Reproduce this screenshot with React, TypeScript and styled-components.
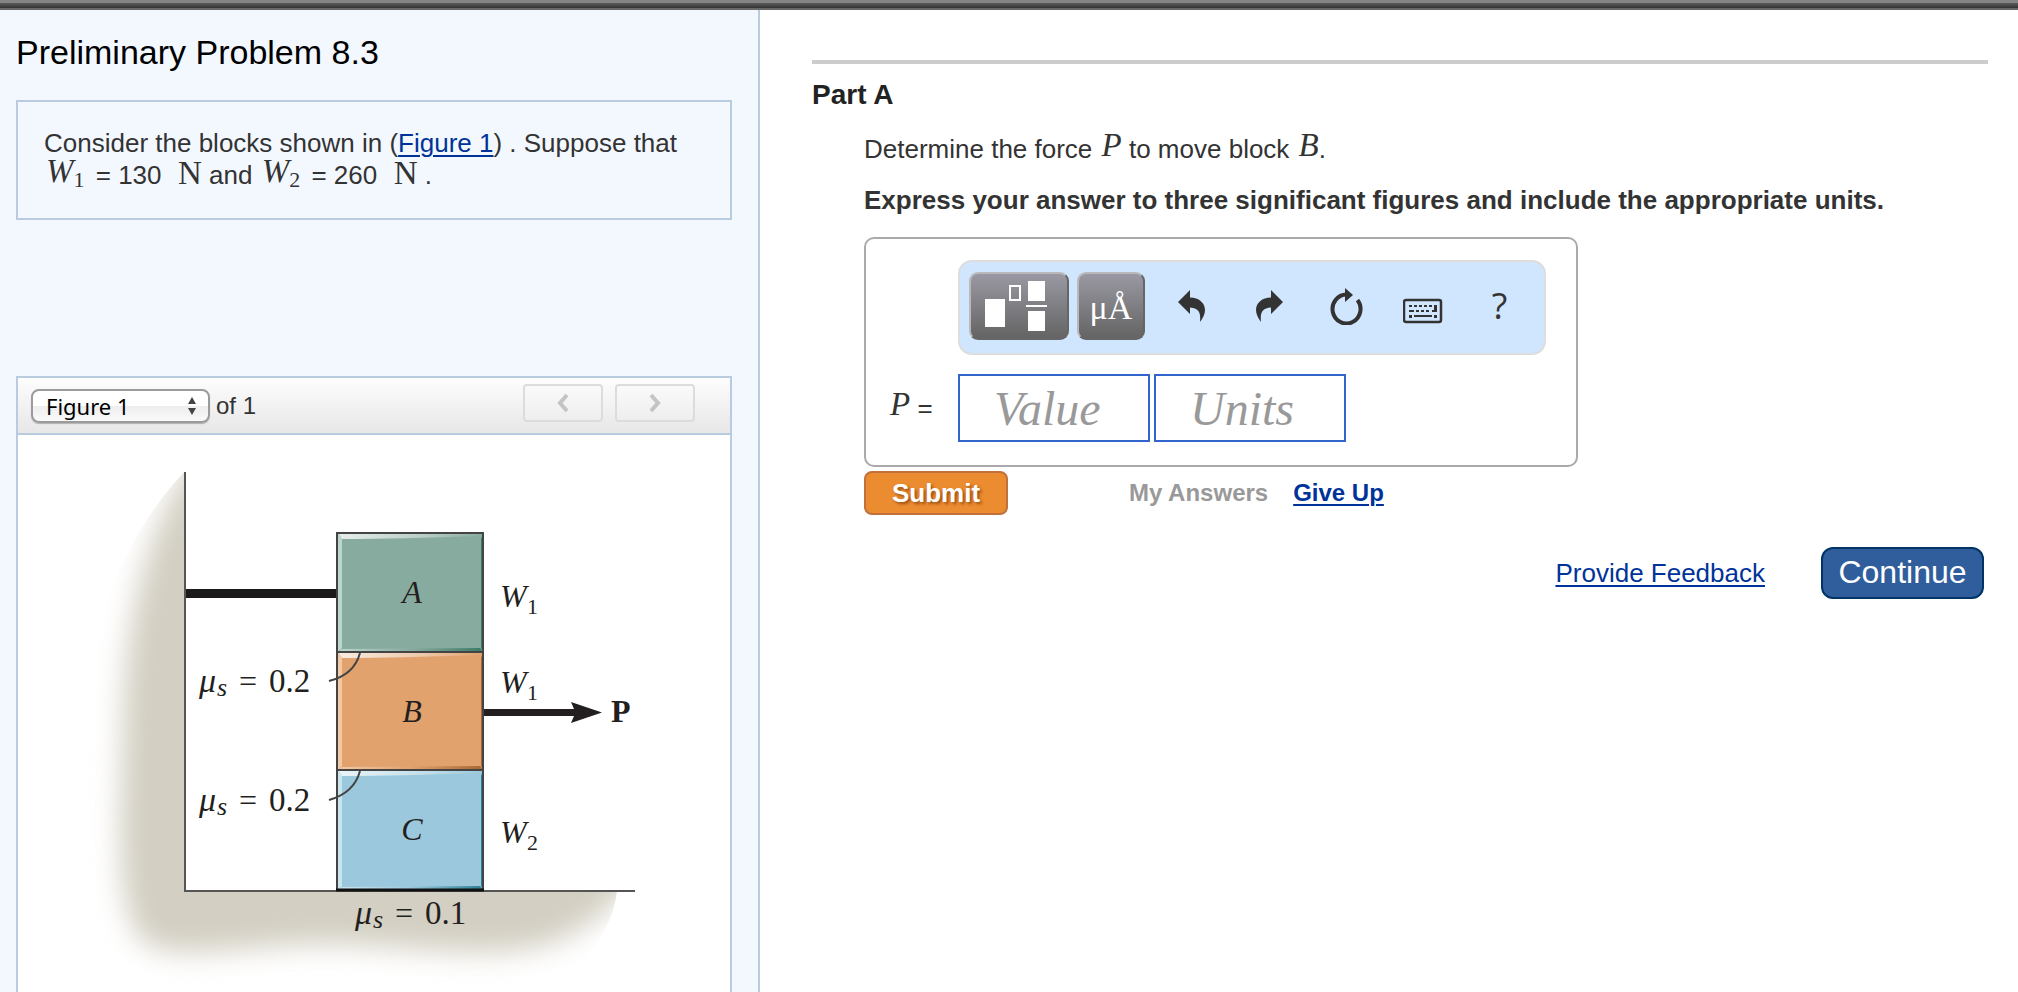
import React from "react";
import styled, { createGlobalStyle } from "styled-components";

const SANS = '"Liberation Sans", Arial, sans-serif';
const SERIF = '"Liberation Serif", "Times New Roman", serif';

const GlobalStyle = createGlobalStyle`
  *, *::before, *::after { box-sizing: border-box; }
  body {
    margin: 0;
    background: #fff;
    color: #333;
    font-family: ${SANS};
    font-size: 26px;
    line-height: 32px;
  }
  a { color: #003399; text-underline-offset: 3px; text-decoration-thickness: 2px; }
`;

const Page = styled.div`
  display: flex;
  flex-direction: column;
  min-height: 100vh;
`;

const TopBar = styled.div`
  flex: none;
  height: 10px;
  background: linear-gradient(#858585 0 3px, #5a5a5a 3px, #333 8px, #686868 8px);
`;

const Columns = styled.div`
  flex: 1;
  display: grid;
  grid-template-columns: minmax(0, 760fr) minmax(0, 1258fr);
`;

const ProblemPanel = styled.aside`
  display: flex;
  flex-direction: column;
  padding: 22px 26px 0 16px;
  background: #f3f8ff;
  border-right: 2px solid #b9cbdf;
`;

const Title = styled.h1`
  margin: 0 0 28px;
  font-size: 34px;
  line-height: 40px;
  font-weight: 400;
  color: #000;
`;

const Statement = styled.p`
  margin: 0 0 156px;
  min-height: 120px;
  padding: 25px 26px;
  border: 2px solid #b9cbdf;
`;

const MathText = styled.span<{ $italic?: boolean }>`
  margin-left: 2px;
  font-family: ${SERIF};
  font-size: 33px;
  line-height: 1px;
  font-style: ${(p) => (p.$italic ? "italic" : "normal")};
  vertical-align: ${(p) => (p.$italic ? "2px" : "baseline")};
`;

const Subscript = styled.sub`
  font-family: ${SERIF};
  font-size: 22px;
  line-height: 1px;
  vertical-align: -3px;
  margin-right: 4px;
`;

const FigureCard = styled.section`
  flex: 1;
  display: flex;
  flex-direction: column;
  background: #fff;
  border: 2px solid #b9cbdf;
  border-bottom: 0;
`;

const FigureHeader = styled.header`
  display: flex;
  align-items: center;
  gap: 12px;
  height: 57px;
  padding: 0 35px 0 13px;
  border-bottom: 2px solid #b9cbdf;
  background: linear-gradient(#fdfdfd, #e7e7e7);
`;

const FigurePicker = styled.label`
  display: flex;
  align-items: center;
  gap: 6px;
  margin-right: auto;
  font-size: 24px;
`;

const SelectFrame = styled.span`
  display: grid;
  align-items: center;
  width: 179px;
  > * { grid-area: 1 / 1; }
  > svg { justify-self: end; margin-right: 13px; pointer-events: none; }
`;

const Select = styled.select`
  appearance: none;
  height: 34px;
  padding: 0 30px 0 13px;
  border: 2px solid #9b9b9b;
  border-radius: 8px;
  background: linear-gradient(#fff 0 50%, #ededed 50%, #fafafa);
  box-shadow: 0 1px 1px rgba(0, 0, 0, 0.25);
  font: 22px/28px "Noto Sans", sans-serif;
  color: #000;
`;

const PagerButton = styled.button`
  display: grid;
  place-items: center;
  width: 80px;
  height: 38px;
  margin-bottom: 6px;
  padding: 0;
  border: 2px solid #dcdcdc;
  border-radius: 4px;
  background: linear-gradient(#fafafa, #eee);
`;

const Diagram = styled.svg`
  display: block;
  width: 100%;
  height: auto;
  font-family: ${SERIF};
  font-size: 32px;
  fill: #231f20;
`;

const AnswerPanel = styled.main`
  padding: 50px 30px 0 52px;
`;

const Rule = styled.hr`
  margin: 0;
  border: 0;
  height: 4px;
  background: #ccc;
`;

const PartTitle = styled.h2`
  margin: 15px 0 0;
  font-size: 28px;
  line-height: 32px;
  color: #222;
`;

const PartBody = styled.div`
  padding-left: 52px;
`;

const Question = styled.p<{ $strong?: boolean }>`
  margin: ${(p) => (p.$strong ? "19px 0 21px" : "22px 0 0")};
  font-weight: ${(p) => (p.$strong ? 700 : 400)};
`;

const AnswerBox = styled.div`
  display: grid;
  grid-template-columns: 70px auto;
  justify-content: start;
  row-gap: 19px;
  width: fit-content;
  padding: 21px 30px 23px 22px;
  border: 2px solid #aaa;
  border-radius: 10px;
`;

const Toolbar = styled.div`
  grid-column: 2;
  display: flex;
  align-items: center;
  gap: 8px;
  height: 95px;
  padding: 0 0 4px 9px;
  width: 588px;
  border: 2px solid #ddd;
  border-radius: 14px;
  background: #d0e5fe;
`;

const TemplateButton = styled.button<{ $wide?: boolean }>`
  display: grid;
  place-items: center;
  width: ${(p) => (p.$wide ? 100 : 68)}px;
  height: 68px;
  padding: ${(p) => (p.$wide ? "0 6px 0 0" : "5px 0 0")};
  border: 2px solid;
  border-color: #b9b9bb #666 #666 #b9b9bb;
  border-radius: 9px;
  background: linear-gradient(#9a99a3, #646464);
  color: #fff;
  font: 34px/40px ${SERIF};
`;

const IconGroup = styled.div`
  display: flex;
`;

const IconButton = styled.button`
  display: grid;
  place-items: center;
  width: 77px;
  height: 60px;
  padding: 0;
  border: 0;
  background: none;
  color: #333;
  font: 36px/40px "Open Sans", ${SANS};
`;

const AnswerLabel = styled.label`
  align-self: center;
`;

const Fields = styled.div`
  display: flex;
  gap: 4px;
`;

const Field = styled.input`
  width: 192px;
  height: 68px;
  padding: 0 30px 0 34px;
  border: 2px solid #3366cc;
  background: #fff;
  font: italic 48px/60px ${SERIF};
  color: #333;
  &::placeholder { color: #999; opacity: 1; }
`;

const Actions = styled.div`
  display: flex;
  align-items: center;
  margin-top: 4px;
  font-size: 24px;
  font-weight: 700;
`;

const SubmitButton = styled.button`
  width: 144px;
  height: 44px;
  margin-right: 121px;
  padding: 0;
  border: 2px solid #c07038;
  border-radius: 8px;
  background: #ec8c30;
  color: #fff;
  font: 700 26px/32px ${SANS};
  text-shadow: 2px 2px 3px rgba(100, 40, 0, 0.6);
`;

const Muted = styled.span`
  margin-right: 25px;
  color: #999;
`;

const Footer = styled.footer`
  display: flex;
  justify-content: flex-end;
  align-items: center;
  gap: 56px;
  margin-top: 32px;
  padding-right: 4px;
`;

const ContinueButton = styled.button`
  width: 163px;
  height: 52px;
  padding: 0 0 2px;
  border: 2px solid #003366;
  border-radius: 12px;
  background: #305d9b;
  color: #fff;
  font: 32px/40px ${SANS};
`;

type BlockProps = {
  y: number;
  height: number;
  fill: string;
  light: string;
  dark: string;
  name: string;
};

function Block({ y, height, fill, light, dark, name }: BlockProps) {
  const bottom = y + height;
  const shade = `shade-${name}`;
  const glow = `glow-${name}`;
  return (
    <g>
      <defs>
        <linearGradient id={shade}>
          <stop offset="0" stopColor={light} />
          <stop offset="0.5" stopColor={fill} />
          <stop offset="1" stopColor={dark} />
        </linearGradient>
        <linearGradient id={glow}>
          <stop offset="0" stopColor="#fff" stopOpacity="0.8" />
          <stop offset="0.6" stopColor="#fff" stopOpacity="0.4" />
          <stop offset="1" stopColor="#fff" stopOpacity="0" />
        </linearGradient>
      </defs>
      <rect x="338" y={y} width="145" height={height} fill={fill} />
      <path d={`M338 ${y}H483L478 ${y + 3}Q400 ${y + 6} 342 ${y + 6}Z`} fill={`url(#${glow})`} />
      <path d={`M338 ${y}L342 ${y + 6}V${bottom - 4}L338 ${bottom}Z`} fill={light} />
      <path d={`M338 ${bottom}L342 ${bottom - 3}L480 ${bottom - 4}L483 ${bottom}Z`} fill={`url(#${shade})`} />
      <path d={`M483 ${y}L481 ${y + 6}V${bottom - 4}L483 ${bottom}Z`} fill={dark} />
      <rect x="337" y={y} width="146" height={height} fill="none" stroke="#444" strokeWidth="2" />
      <text x="412" y={y + 70} textAnchor="middle" fontStyle="italic">{name}</text>
    </g>
  );
}

function Friction({ x, y, value }: { x: number; y: number; value: string }) {
  return (
    <g>
      <text x={x} y={y} fontSize="34" fontStyle="italic">μ</text>
      <text x={x + 18} y={y + 4} fontSize="26" fontStyle="italic">s</text>
      <text x={x + 40} y={y}>=</text>
      <text x={x + 70} y={y} fontSize="33">{value}</text>
    </g>
  );
}

function Weight({ y, index }: { y: number; index: string }) {
  return (
    <g>
      <text x="500" y={y} fontStyle="italic">W</text>
      <text x="527" y={y + 7} fontSize="22">{index}</text>
    </g>
  );
}

function BlocksDiagram() {
  return (
    <Diagram viewBox="18 435 712 557" role="img" aria-label="Stacked blocks A, B and C">
      <defs>
        <filter id="soft" x="-20%" y="-20%" width="140%" height="140%">
          <feGaussianBlur stdDeviation="14" />
        </filter>
        <clipPath id="ground">
          <path d="M185 471C135 525 84 610 84 760V992H540Q610 950 617 891H185Z" />
        </clipPath>
      </defs>
      <g clipPath="url(#ground)">
        <path
          d="M225 420C160 490 130 580 124 700C122 800 112 890 138 936C165 966 230 946 320 944C400 944 480 962 545 945C605 925 640 880 640 855H215Z"
          fill="#d3cfc2"
          filter="url(#soft)"
        />
      </g>
      <path d="M185 472V891H635" fill="none" stroke="#555" strokeWidth="2" />
      <rect x="186" y="589" width="151" height="9" fill="#1c191a" />
      <Block name="A" y={533} height={119} fill="#88ab9f" light="#bcd6cc" dark="#3a7a66" />
      <Block name="B" y={652} height={118} fill="#e2a26e" light="#f3c9a4" dark="#a86635" />
      <Block name="C" y={770} height={120} fill="#9bc8dc" light="#cbe5f0" dark="#2b8094" />
      <path d="M336 890H484" stroke="#111" strokeWidth="3" />
      <path d="M360 653Q354 675 329 681M360 771Q354 793 329 800" fill="none" stroke="#444" strokeWidth="2" />
      <path d="M484 709H574L571 702L602 712.500L571 723L574 716H484Z" />
      <Weight y={607} index="1" />
      <Weight y={693} index="1" />
      <Weight y={843} index="2" />
      <text x="611" y="722" fontWeight="700">P</text>
      <Friction x={199} y={692} value="0.2" />
      <Friction x={199} y={811} value="0.2" />
      <Friction x={355} y={924} value="0.1" />
    </Diagram>
  );
}

function TemplatesIcon() {
  return (
    <svg width="64" height="54" viewBox="0 0 64 54" fill="#fff">
      <rect x="1" y="20" width="20" height="28" />
      <rect x="26" y="7" width="10" height="14" fill="none" stroke="#fff" strokeWidth="2" />
      <rect x="44" y="2" width="17" height="20" />
      <rect x="42" y="26" width="21" height="2" />
      <rect x="44" y="32" width="17" height="20" />
    </svg>
  );
}

function UndoIcon({ flipped }: { flipped?: boolean }) {
  return (
    <svg width="28" height="34" viewBox="0 0 28 34" fill="currentColor">
      <path
        transform={flipped ? "matrix(-1 0 0 1 28 0)" : undefined}
        d="M0 13L12 1V8.500C21 8.500 27 14 27 21C27 25 25 29 22 33C23 24 21 19 12 18.500V25Z"
      />
    </svg>
  );
}

function ResetIcon() {
  return (
    <svg width="34" height="38" viewBox="0 0 34 38">
      <path d="M17.500 7.500A14 14.500 0 1 0 28.500 13" fill="none" stroke="currentColor" strokeWidth="4" />
      <path d="M16 1L24 8L16 15Z" fill="currentColor" />
    </svg>
  );
}

function KeyboardIcon() {
  return (
    <svg width="40" height="38" viewBox="0 0 40 38" fill="currentColor">
      <rect x="1" y="13" width="37" height="22" rx="2" fill="none" stroke="currentColor" strokeWidth="2.500" />
      {[6, 11, 16, 21, 26].map((x) => (
        <rect key={x} x={x} y="18" width="3" height="2" />
      ))}
      <path d="M31 18H34V25H29V23H31ZM6 23H11V25H6ZM13 23H16V25H13ZM18 23H21V25H18ZM23 23H26V25H23Z" />
      <path d="M6 28H9V31H6ZM11 28H29V30H11ZM31 28H34V31H31Z" />
    </svg>
  );
}

function Chevron({ right }: { right?: boolean }) {
  return (
    <svg width="14" height="20" viewBox="0 0 14 20" fill="none" stroke="#c4c4c4" strokeWidth="4">
      <path d={right ? "M3 2L10 10L3 18" : "M11 2L4 10L11 18"} />
    </svg>
  );
}

export default function App() {
  return (
    <>
      <GlobalStyle />
      <Page>
        <TopBar />
        <Columns>
          <ProblemPanel>
            <Title>Preliminary Problem 8.3</Title>
            <Statement>
              Consider the blocks shown in (<a href="#figure">Figure 1</a>) . Suppose that{" "}
              <MathText $italic>W</MathText>
              <Subscript>1</Subscript> = 130 &nbsp;<MathText>N</MathText> and{" "}
              <MathText $italic>W</MathText>
              <Subscript>2</Subscript> = 260 &nbsp;<MathText>N</MathText> .
            </Statement>
            <FigureCard id="figure">
              <FigureHeader>
                <FigurePicker>
                  <SelectFrame>
                    <Select aria-label="Figure">
                      <option>Figure 1</option>
                    </Select>
                    <svg width="10" height="18" viewBox="0 0 10 18" fill="#444">
                      <path d="M5 0L9 7H1ZM5 18L9 11H1Z" />
                    </svg>
                  </SelectFrame>
                  of 1
                </FigurePicker>
                <PagerButton type="button" aria-label="Previous figure">
                  <Chevron />
                </PagerButton>
                <PagerButton type="button" aria-label="Next figure">
                  <Chevron right />
                </PagerButton>
              </FigureHeader>
              <BlocksDiagram />
            </FigureCard>
          </ProblemPanel>
          <AnswerPanel>
            <Rule />
            <PartTitle>Part A</PartTitle>
            <PartBody>
              <Question>
                Determine the force <MathText $italic>P</MathText> to move block{" "}
                <MathText $italic>B</MathText>.
              </Question>
              <Question $strong>
                Express your answer to three significant figures and include the appropriate units.
              </Question>
              <AnswerBox>
                <Toolbar role="toolbar" aria-label="Equation tools">
                  <TemplateButton type="button" $wide aria-label="Templates">
                    <TemplatesIcon />
                  </TemplateButton>
                  <TemplateButton type="button">μÅ</TemplateButton>
                  <IconGroup>
                    <IconButton type="button" aria-label="Undo"><UndoIcon /></IconButton>
                    <IconButton type="button" aria-label="Redo"><UndoIcon flipped /></IconButton>
                    <IconButton type="button" aria-label="Reset"><ResetIcon /></IconButton>
                    <IconButton type="button" aria-label="Keyboard"><KeyboardIcon /></IconButton>
                    <IconButton type="button">?</IconButton>
                  </IconGroup>
                </Toolbar>
                <AnswerLabel htmlFor="value">
                  <MathText $italic>P</MathText> =
                </AnswerLabel>
                <Fields>
                  <Field id="value" placeholder="Value" />
                  <Field aria-label="Units" placeholder="Units" />
                </Fields>
              </AnswerBox>
              <Actions>
                <SubmitButton type="button">Submit</SubmitButton>
                <Muted>My Answers</Muted>
                <a href="#give-up">Give Up</a>
              </Actions>
            </PartBody>
            <Footer>
              <a href="#feedback">Provide Feedback</a>
              <ContinueButton type="button">Continue</ContinueButton>
            </Footer>
          </AnswerPanel>
        </Columns>
      </Page>
    </>
  );
}
